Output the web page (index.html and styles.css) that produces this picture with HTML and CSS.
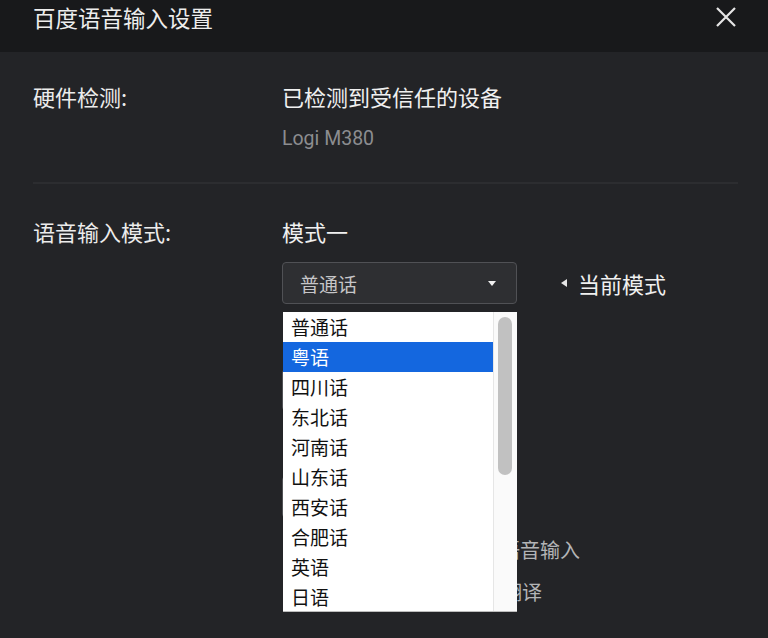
FILE: index.html
```html
<!DOCTYPE html>
<html lang="zh-CN">
<head>
<meta charset="utf-8">
<title>百度语音输入设置</title>
<link rel="stylesheet" href="styles.css">
</head>
<body>
<header class="titlebar">
  <div class="title">百度语音输入设置</div>
  <svg class="close" width="22" height="22" viewBox="0 0 22 22"><path d="M2 2 L20 20 M20 2 L2 20" stroke="#e6e6e6" stroke-width="2.2" fill="none"/></svg>
</header>
<main class="content">
  <section class="row hw">
    <div class="label">硬件检测:</div>
    <div class="value">
      <div class="main-text">已检测到受信任的设备</div>
      <div class="device">Logi M380</div>
    </div>
  </section>
  <div class="divider"></div>
  <section class="row mode">
    <div class="label">语音输入模式:</div>
    <div class="value">
      <div class="main-text">模式一</div>
      <div class="select-line">
        <div class="select-wrap">
          <div class="select">
            <span>普通话</span>
            <svg class="caret" width="8" height="5" viewBox="0 0 8 5"><path d="M0 0 L8 0 L4 5 Z" fill="#f0f0f0"/></svg>
          </div>
          <div class="dropdown">
            <ul class="options">
              <li>普通话</li>
              <li class="active">粤语</li>
              <li>四川话</li>
              <li>东北话</li>
              <li>河南话</li>
              <li>山东话</li>
              <li>西安话</li>
              <li>合肥话</li>
              <li>英语</li>
              <li>日语</li>
            </ul>
            <div class="scrollbar"><div class="thumb"></div></div>
          </div>
        </div>
        <div class="current">
          <svg width="6" height="8" viewBox="0 0 6 8"><path d="M6 0 L6 8 L0 4 Z" fill="#e6e6e6"/></svg>
          <span>当前模式</span>
        </div>
      </div>
      <div class="spacer"></div>
      <div class="select"></div>
      <div class="spacer"></div>
      <div class="select"></div>
      <div class="option-line first">语音输入</div>
      <div class="option-line second">翻译</div>
    </div>
  </section>
</main>
</body>
</html>
```

FILE: styles.css
```css
html, body {
  margin: 0;
  padding: 0;
}
body {
  background: #232427;
  color: #e8e8e8;
  font-family: "Noto Sans CJK SC", "Noto Sans", sans-serif;
  width: 768px;
  height: 638px;
  overflow: hidden;
}
.titlebar {
  height: 52px;
  background: #18191b;
  display: flex;
  justify-content: space-between;
  align-items: flex-start;
  padding: 0 31px 0 33px;
  box-sizing: border-box;
}
.title {
  font-size: 22.5px;
  line-height: 34px;
  color: #ededed;
}
.close {
  margin-top: 6px;
}
.content {
  padding: 0 30px 0 33px;
}
.row {
  display: flex;
}
.hw {
  padding-top: 29px;
}
.label {
  width: 249px;
  flex: none;
  font-size: 22px;
  line-height: 30px;
  color: #ececec;
}
.value {
  flex: 1;
}
.main-text {
  font-size: 22px;
  line-height: 30px;
  color: #f0f0f0;
}
.device {
  margin-top: 16px;
  font-family: "Roboto", "Liberation Sans", sans-serif;
  font-size: 19.5px;
  line-height: 24px;
  color: #8c8d90;
}
.divider {
  margin-top: 31px;
  height: 2px;
  background: #2c2d30;
}
.mode {
  padding-top: 32px;
}
.select-line {
  display: flex;
  align-items: center;
  margin-top: 16px;
}
.select-wrap {
  position: relative;
}
.select {
  width: 235px;
  height: 42px;
  box-sizing: border-box;
  border: 1px solid #505155;
  border-radius: 4px;
  background: #2e2f32;
  display: flex;
  align-items: center;
  justify-content: space-between;
  padding: 0 20px 0 17px;
  font-size: 19px;
  color: #c6c6c8;
}
.spacer {
  height: 30px;
  margin-top: 19px;
  margin-bottom: 16px;
}
.current {
  margin-left: 44px;
  display: flex;
  align-items: center;
  gap: 11px;
  font-size: 22px;
  color: #f0f0f0;
}
.dropdown {
  position: absolute;
  top: 50px;
  left: 1px;
  width: 234px;
  height: 299px;
  background: #ffffff;
  display: flex;
  box-shadow: 0 1px 0 #bdbdbd;
  z-index: 5;
}
.options {
  list-style: none;
  margin: 0;
  padding: 0;
  width: 210px;
}
.options li {
  height: 30px;
  line-height: 30px;
  padding-left: 8px;
  font-size: 19px;
  color: #111111;
}
.options li.active {
  background: #1467df;
  color: #ffffff;
}
.scrollbar {
  flex: 1;
  background: #fafafa;
  border-left: 1px solid #e6e6e6;
}
.thumb {
  margin: 5px 0 0 4px;
  width: 14px;
  height: 158px;
  border-radius: 7px;
  background: #c1c1c1;
}
.option-line {
  font-size: 20px;
  line-height: 30px;
  color: #b3b4b6;
}
.option-line.first {
  margin-top: 17px;
  padding-left: 218px;
}
.option-line.second {
  margin-top: 12px;
  padding-left: 220px;
}
```
